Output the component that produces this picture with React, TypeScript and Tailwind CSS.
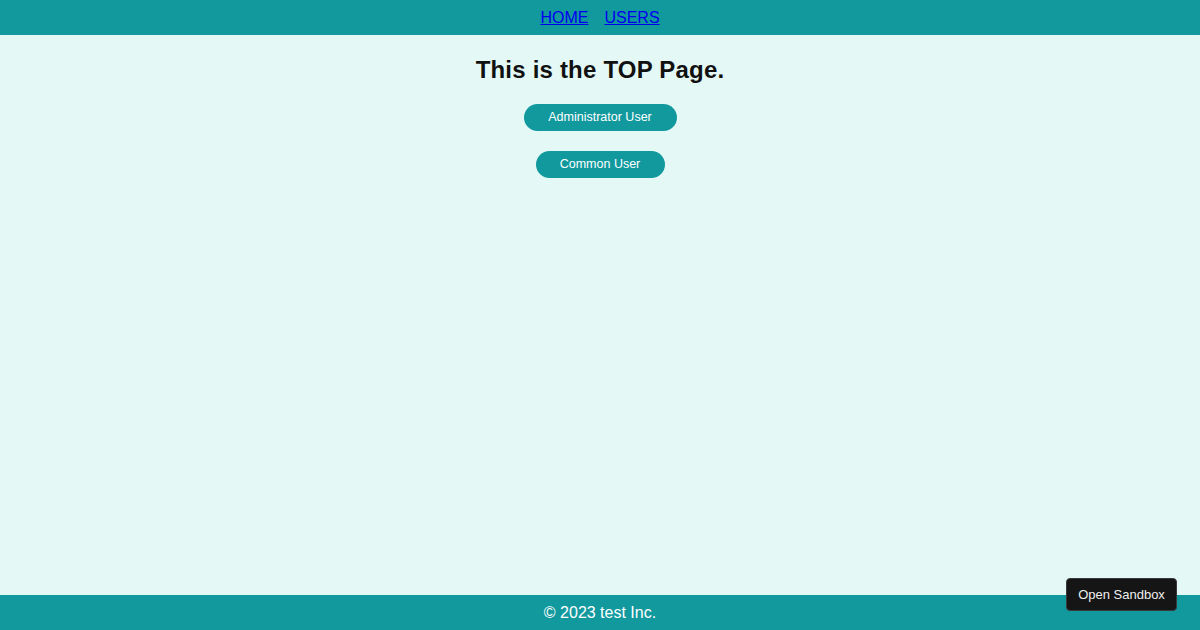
export default function App() {
    return (
        <div className="relative flex h-screen flex-col bg-[#e4f9f5] font-['Liberation_Sans',Arial,sans-serif]">
            <header className="flex h-[35px] items-center justify-center gap-4 bg-[#11999e]">
                <a href="#" className="text-[16px] text-[#0000ee] underline">
                    HOME
                </a>
                <a href="#" className="text-[16px] text-[#0000ee] underline">
                    USERS
                </a>
            </header>
            <main className="flex flex-1 flex-col items-center">
                <h1 className="mt-[19px] text-[24px] leading-8 font-bold tracking-[0.2px] text-[#111]">
                    This is the TOP Page.
                </h1>
                <button className="mt-[18px] h-[27px] w-[153px] rounded-full bg-[#11999e] text-[12.5px] text-white">
                    Administrator User
                </button>
                <button className="mt-[20px] h-[27px] w-[129px] rounded-full bg-[#11999e] text-[12.5px] text-white">
                    Common User
                </button>
            </main>
            <footer className="flex h-[35px] items-center justify-center bg-[#11999e] text-[16px] text-white">
                © 2023 test Inc.
            </footer>
            <button className="absolute right-[23px] bottom-[19px] h-[33px] w-[111px] rounded border border-[#3a3a3a] bg-[#151515] text-[13px] text-[#eee]">
                Open Sandbox
            </button>
        </div>
    );
}
